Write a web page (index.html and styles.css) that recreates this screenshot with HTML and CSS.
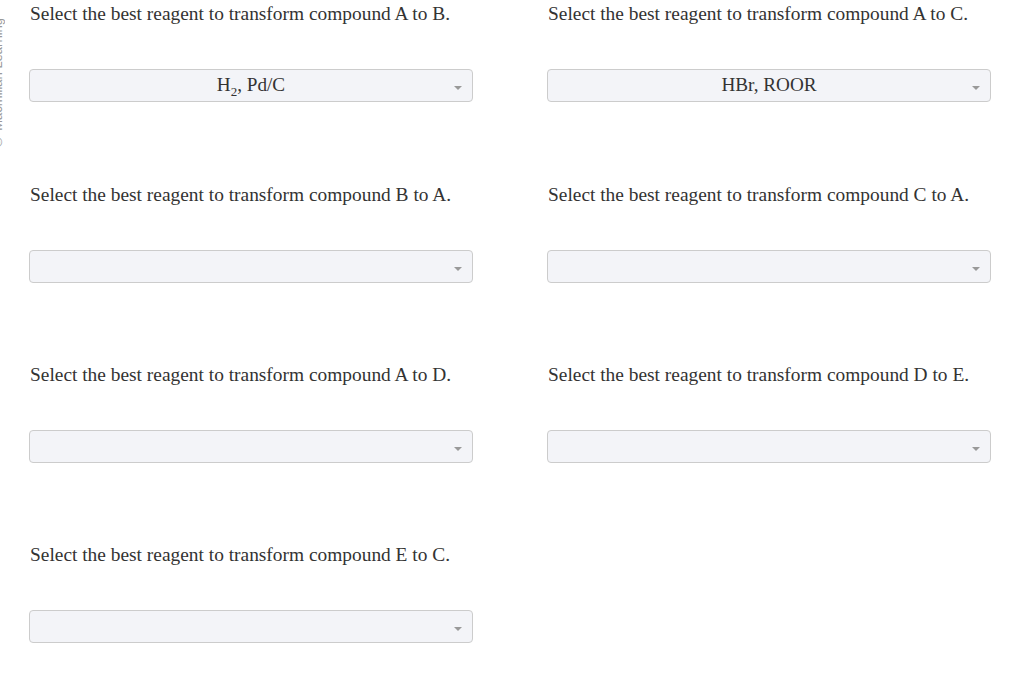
FILE: index.html
```html
<!DOCTYPE html>
<html lang="en">
<head>
    <meta charset="UTF-8">
    <title>Reagents</title>
    <link rel="stylesheet" href="styles.css">
</head>
<body>

    <!-- cut-off side label -->
    <div class="side-label">© Macmillan Learning</div>

    <div class="questions">
        <div class="question">
            <p>Select the best reagent to transform compound A to B.</p>
            <div class="dropdown"><span class="value">H<sub>2</sub>, Pd/C</span><span class="caret"></span></div>
        </div>
        <div class="question">
            <p>Select the best reagent to transform compound A to C.</p>
            <div class="dropdown"><span class="value">HBr, ROOR</span><span class="caret"></span></div>
        </div>
        <div class="question">
            <p>Select the best reagent to transform compound B to A.</p>
            <div class="dropdown"><span class="value"></span><span class="caret"></span></div>
        </div>
        <div class="question">
            <p>Select the best reagent to transform compound C to A.</p>
            <div class="dropdown"><span class="value"></span><span class="caret"></span></div>
        </div>
        <div class="question">
            <p>Select the best reagent to transform compound A to D.</p>
            <div class="dropdown"><span class="value"></span><span class="caret"></span></div>
        </div>
        <div class="question">
            <p>Select the best reagent to transform compound D to E.</p>
            <div class="dropdown"><span class="value"></span><span class="caret"></span></div>
        </div>
        <div class="question">
            <p>Select the best reagent to transform compound E to C.</p>
            <div class="dropdown"><span class="value"></span><span class="caret"></span></div>
        </div>
    </div>

</body>
</html>
```

FILE: styles.css
```css
/* General */
body {
    margin: 0;
    background: #fff;
    font-family: "Liberation Serif", "Times New Roman", serif;
    color: #333;
    overflow: hidden;
    height: 677px;
}

.side-label {
    position: absolute;
    left: -10px;
    top: 18px;
    writing-mode: vertical-rl;
    transform: rotate(180deg);
    font-family: "Liberation Sans", Arial, sans-serif;
    font-size: 13px;
    color: #999;
}

/* Questions grid */
.questions {
    display: grid;
    grid-template-columns: 518px 518px;
    grid-template-rows: 181px 180px 180px 136px;
    padding-left: 29px;
}

.question p {
    margin: 0;
    padding: 4px 0 0 1px;
    font-size: 19.4px;
    line-height: 20px;
    height: 40px;
}

/* Dropdown */
.dropdown {
    margin-top: 25px;
    width: 444px;
    height: 33px;
    box-sizing: border-box;
    border: 1px solid #ccc;
    border-radius: 4px;
    background: #f3f4f8;
    display: flex;
    align-items: center;
    padding: 0 10px 0 18px;
}

.dropdown .value {
    flex: 1;
    text-align: center;
    font-size: 19.2px;
    line-height: 20px;
    margin-top: -2px;
}

.dropdown sub {
    font-size: 13px;
    line-height: 0;
}

.caret {
    width: 0;
    height: 0;
    border-left: 4px solid transparent;
    border-right: 4px solid transparent;
    border-top: 4px solid #999;
    margin-top: 5px;
}
```
